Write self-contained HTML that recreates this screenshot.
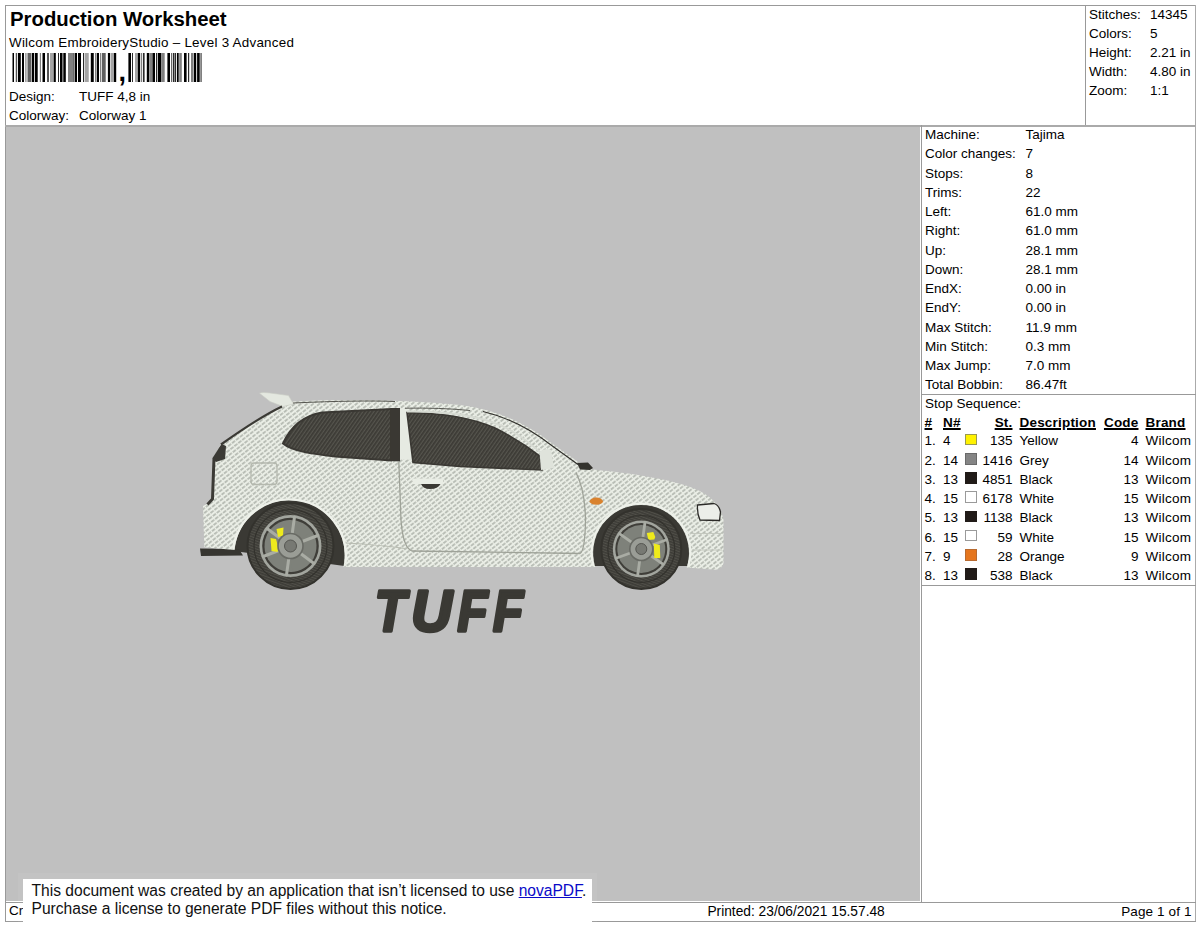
<!DOCTYPE html>
<html><head><meta charset="utf-8">
<style>
html,body{margin:0;padding:0;background:#fff;width:1200px;height:927px;overflow:hidden;position:relative}
body{font-family:"Liberation Sans",sans-serif;color:#000}
.a{position:absolute;white-space:nowrap;line-height:1}
.ln{position:absolute;background:#999}
.t{font-size:13.5px;letter-spacing:0px}
.b{font-weight:bold;letter-spacing:0.2px}
.u{text-decoration:underline;text-decoration-thickness:1.5px;text-underline-offset:0.5px}
.r{text-align:right}
.sw{position:absolute;width:10px;height:9.5px;border:1px solid #888}
svg{position:absolute;left:0;top:0}
</style></head><body>
<!-- frame -->
<div class="ln" style="left:5px;top:5.0px;width:1191px;height:1px"></div>
<div class="ln" style="left:5px;top:5.0px;width:1px;height:917px"></div>
<div class="ln" style="left:1195px;top:5px;width:1px;height:917px;background:#aaa"></div>
<div class="ln" style="left:5px;top:921.0px;width:1191px;height:1px"></div>
<div class="ln" style="left:5px;top:125.0px;width:1191px;height:2px;background:#aaa"></div>
<div class="ln" style="left:1085px;top:5.0px;width:1px;height:120px"></div>
<!-- gray design area -->
<div style="position:absolute;left:6px;top:127.0px;width:914px;height:774px;background:#c0c0c0"></div>
<div class="ln" style="left:921px;top:125px;width:1px;height:777px"></div>
<div class="ln" style="left:921px;top:394px;width:275px;height:1px"></div>
<div class="ln" style="left:921px;top:585px;width:275px;height:1px"></div>
<div class="ln" style="left:5px;top:902.0px;width:1191px;height:1px"></div>

<!-- header -->
<div class="a" style="left:10px;top:9.0px;font-size:20.35px;font-weight:bold">Production Worksheet</div>
<div class="a" style="left:9px;top:35.9px;font-size:13.4px;letter-spacing:0.25px">Wilcom EmbroideryStudio – Level 3 Advanced</div>
<svg width="1200" height="100" style="left:0;top:0"><rect x="12.5" y="53" width="1.5" height="29" fill="#000"/><rect x="15.8" y="53" width="1.0" height="29" fill="#2a2a2a"/><rect x="17.9" y="53" width="2.9" height="29" fill="#000"/><rect x="22.0" y="53" width="2.0" height="29" fill="#000"/><rect x="25.0" y="53" width="1.7" height="29" fill="#a4a4a4"/><rect x="27.5" y="53" width="3.5" height="29" fill="#606060"/><rect x="31.7" y="53" width="2.3" height="29" fill="#000"/><rect x="34.8" y="53" width="2.9" height="29" fill="#000"/><rect x="39.8" y="53" width="1.2" height="29" fill="#808080"/><rect x="42.5" y="53" width="2.5" height="29" fill="#000"/><rect x="47.0" y="53" width="2.0" height="29" fill="#555"/><rect x="50.0" y="53" width="3.75" height="29" fill="#a4a4a4"/><rect x="53.75" y="53" width="2.05" height="29" fill="#000"/><rect x="58.0" y="53" width="1.0" height="29" fill="#2a2a2a"/><rect x="60.0" y="53" width="2.5" height="29" fill="#000"/><rect x="63.3" y="53" width="2.5" height="29" fill="#000"/><rect x="68.0" y="53" width="5.0" height="29" fill="#808080"/><rect x="73.3" y="53" width="0.7" height="29" fill="#2a2a2a"/><rect x="74.6" y="53" width="2.4" height="29" fill="#000"/><rect x="78.0" y="53" width="3.0" height="29" fill="#000"/><rect x="83.0" y="53" width="1.0" height="29" fill="#2a2a2a"/><rect x="84.6" y="53" width="4.15" height="29" fill="#a4a4a4"/><rect x="90.8" y="53" width="2.95" height="29" fill="#000"/><rect x="95.0" y="53" width="1.0" height="29" fill="#808080"/><rect x="96.7" y="53" width="2.3" height="29" fill="#000"/><rect x="100.0" y="53" width="1.3" height="29" fill="#808080"/><rect x="102.0" y="53" width="3.7" height="29" fill="#606060"/><rect x="107.9" y="53" width="2.1" height="29" fill="#000"/><rect x="110.5" y="53" width="3.5" height="29" fill="#a4a4a4"/><rect x="114.0" y="53" width="2.2" height="29" fill="#000"/><rect x="128.4" y="53" width="2.6" height="29" fill="#000"/><rect x="132.0" y="53" width="1.0" height="29" fill="#2a2a2a"/><rect x="135.0" y="53" width="2.0" height="29" fill="#a4a4a4"/><rect x="137.6" y="53" width="2.4" height="29" fill="#000"/><rect x="140.7" y="53" width="1.3" height="29" fill="#808080"/><rect x="142.9" y="53" width="1.7" height="29" fill="#2a2a2a"/><rect x="146.8" y="53" width="2.6" height="29" fill="#000"/><rect x="149.9" y="53" width="2.6" height="29" fill="#808080"/><rect x="152.5" y="53" width="2.5" height="29" fill="#000"/><rect x="156.0" y="53" width="1.3" height="29" fill="#2a2a2a"/><rect x="158.0" y="53" width="3.2" height="29" fill="#000"/><rect x="161.2" y="53" width="3.5" height="29" fill="#808080"/><rect x="167.4" y="53" width="2.6" height="29" fill="#000"/><rect x="171.3" y="53" width="0.9" height="29" fill="#2a2a2a"/><rect x="173.0" y="53" width="1.4" height="29" fill="#2a2a2a"/><rect x="174.8" y="53" width="1.3" height="29" fill="#2a2a2a"/><rect x="177.0" y="53" width="1.7" height="29" fill="#000"/><rect x="179.2" y="53" width="2.6" height="29" fill="#808080"/><rect x="184.0" y="53" width="2.6" height="29" fill="#000"/><rect x="188.0" y="53" width="1.2" height="29" fill="#2a2a2a"/><rect x="191.0" y="53" width="2.6" height="29" fill="#808080"/><rect x="194.0" y="53" width="2.2" height="29" fill="#000"/><rect x="197.1" y="53" width="2.6" height="29" fill="#000"/><rect x="200.2" y="53" width="1.8" height="29" fill="#808080"/><text x="118.5" y="81" font-family="Liberation Sans" font-weight="bold" font-size="27" fill="#000">,</text></svg>
<div class="a t" style="left:9px;top:89.5px">Design:</div>
<div class="a t" style="left:79px;top:89.5px">TUFF 4,8 in</div>
<div class="a t" style="left:9px;top:108.7px">Colorway:</div>
<div class="a t" style="left:79px;top:108.7px">Colorway 1</div>

<div class="a t" style="left:1089px;top:7.5px">Stitches:</div>
<div class="a t" style="left:1150px;top:7.5px">14345</div>
<div class="a t" style="left:1089px;top:26.7px">Colors:</div>
<div class="a t" style="left:1150px;top:26.7px">5</div>
<div class="a t" style="left:1089px;top:45.9px">Height:</div>
<div class="a t" style="left:1150px;top:45.9px">2.21 in</div>
<div class="a t" style="left:1089px;top:65.1px">Width:</div>
<div class="a t" style="left:1150px;top:65.1px">4.80 in</div>
<div class="a t" style="left:1089px;top:84.3px">Zoom:</div>
<div class="a t" style="left:1150px;top:84.3px">1:1</div>

<!-- right panel -->
<div class="a t" style="left:925px;top:128.2px">Machine:</div><div class="a t" style="left:1025.5px;top:128.2px">Tajima</div>
<div class="a t" style="left:925px;top:147.43px">Color changes:</div><div class="a t" style="left:1025.5px;top:147.43px">7</div>
<div class="a t" style="left:925px;top:166.66px">Stops:</div><div class="a t" style="left:1025.5px;top:166.66px">8</div>
<div class="a t" style="left:925px;top:185.89px">Trims:</div><div class="a t" style="left:1025.5px;top:185.89px">22</div>
<div class="a t" style="left:925px;top:205.12px">Left:</div><div class="a t" style="left:1025.5px;top:205.12px">61.0 mm</div>
<div class="a t" style="left:925px;top:224.35px">Right:</div><div class="a t" style="left:1025.5px;top:224.35px">61.0 mm</div>
<div class="a t" style="left:925px;top:243.58px">Up:</div><div class="a t" style="left:1025.5px;top:243.58px">28.1 mm</div>
<div class="a t" style="left:925px;top:262.81px">Down:</div><div class="a t" style="left:1025.5px;top:262.81px">28.1 mm</div>
<div class="a t" style="left:925px;top:282.04px">EndX:</div><div class="a t" style="left:1025.5px;top:282.04px">0.00 in</div>
<div class="a t" style="left:925px;top:301.27px">EndY:</div><div class="a t" style="left:1025.5px;top:301.27px">0.00 in</div>
<div class="a t" style="left:925px;top:320.5px">Max Stitch:</div><div class="a t" style="left:1025.5px;top:320.5px">11.9 mm</div>
<div class="a t" style="left:925px;top:339.73px">Min Stitch:</div><div class="a t" style="left:1025.5px;top:339.73px">0.3 mm</div>
<div class="a t" style="left:925px;top:358.96px">Max Jump:</div><div class="a t" style="left:1025.5px;top:358.96px">7.0 mm</div>
<div class="a t" style="left:925px;top:378.19px">Total Bobbin:</div><div class="a t" style="left:1025.5px;top:378.19px">86.47ft</div>
<div class="a t" style="left:925px;top:396.65px">Stop Sequence:</div>
<div class="a t b u" style="left:924.5px;top:416.45px">#</div>
<div class="a t b u" style="left:943px;top:416.45px">N#</div>
<div class="a t b u r" style="left:960px;width:52.5px;top:416.45px">St.</div>
<div class="a t b u" style="left:1019.5px;top:416.45px">Description</div>
<div class="a t b u r" style="left:1090px;width:48.5px;top:416.45px">Code</div>
<div class="a t b u" style="left:1145.5px;top:416.45px">Brand</div>
<div class="a t" style="left:924.5px;top:434.45px">1.</div><div class="a t" style="left:943px;top:434.45px">4</div><div class="sw" style="left:965px;top:433.8px;background:#fff200;border-color:#9a9a50"></div><div class="a t r" style="left:960px;width:52.5px;top:434.45px">135</div><div class="a t" style="left:1019.5px;top:434.45px">Yellow</div><div class="a t r" style="left:1090px;width:48.5px;top:434.45px">4</div><div class="a t" style="left:1145.5px;top:434.45px;letter-spacing:0.25px">Wilcom</div>
<div class="a t" style="left:924.5px;top:453.68px">2.</div><div class="a t" style="left:943px;top:453.68px">14</div><div class="sw" style="left:965px;top:453.03px;background:#858585;border-color:#6a6a6a"></div><div class="a t r" style="left:960px;width:52.5px;top:453.68px">1416</div><div class="a t" style="left:1019.5px;top:453.68px">Grey</div><div class="a t r" style="left:1090px;width:48.5px;top:453.68px">14</div><div class="a t" style="left:1145.5px;top:453.68px;letter-spacing:0.25px">Wilcom</div>
<div class="a t" style="left:924.5px;top:472.91px">3.</div><div class="a t" style="left:943px;top:472.91px">13</div><div class="sw" style="left:965px;top:472.26px;background:#211b18;border-color:#211b18"></div><div class="a t r" style="left:960px;width:52.5px;top:472.91px">4851</div><div class="a t" style="left:1019.5px;top:472.91px">Black</div><div class="a t r" style="left:1090px;width:48.5px;top:472.91px">13</div><div class="a t" style="left:1145.5px;top:472.91px;letter-spacing:0.25px">Wilcom</div>
<div class="a t" style="left:924.5px;top:492.14px">4.</div><div class="a t" style="left:943px;top:492.14px">15</div><div class="sw" style="left:965px;top:491.49px;background:#ffffff;border-color:#9a9a9a"></div><div class="a t r" style="left:960px;width:52.5px;top:492.14px">6178</div><div class="a t" style="left:1019.5px;top:492.14px">White</div><div class="a t r" style="left:1090px;width:48.5px;top:492.14px">15</div><div class="a t" style="left:1145.5px;top:492.14px;letter-spacing:0.25px">Wilcom</div>
<div class="a t" style="left:924.5px;top:511.37px">5.</div><div class="a t" style="left:943px;top:511.37px">13</div><div class="sw" style="left:965px;top:510.72px;background:#211b18;border-color:#211b18"></div><div class="a t r" style="left:960px;width:52.5px;top:511.37px">1138</div><div class="a t" style="left:1019.5px;top:511.37px">Black</div><div class="a t r" style="left:1090px;width:48.5px;top:511.37px">13</div><div class="a t" style="left:1145.5px;top:511.37px;letter-spacing:0.25px">Wilcom</div>
<div class="a t" style="left:924.5px;top:530.6px">6.</div><div class="a t" style="left:943px;top:530.6px">15</div><div class="sw" style="left:965px;top:529.95px;background:#ffffff;border-color:#9a9a9a"></div><div class="a t r" style="left:960px;width:52.5px;top:530.6px">59</div><div class="a t" style="left:1019.5px;top:530.6px">White</div><div class="a t r" style="left:1090px;width:48.5px;top:530.6px">15</div><div class="a t" style="left:1145.5px;top:530.6px;letter-spacing:0.25px">Wilcom</div>
<div class="a t" style="left:924.5px;top:549.83px">7.</div><div class="a t" style="left:943px;top:549.83px">9</div><div class="sw" style="left:965px;top:549.18px;background:#e5761e;border-color:#b86a30"></div><div class="a t r" style="left:960px;width:52.5px;top:549.83px">28</div><div class="a t" style="left:1019.5px;top:549.83px">Orange</div><div class="a t r" style="left:1090px;width:48.5px;top:549.83px">9</div><div class="a t" style="left:1145.5px;top:549.83px;letter-spacing:0.25px">Wilcom</div>
<div class="a t" style="left:924.5px;top:569.06px">8.</div><div class="a t" style="left:943px;top:569.06px">13</div><div class="sw" style="left:965px;top:568.41px;background:#211b18;border-color:#211b18"></div><div class="a t r" style="left:960px;width:52.5px;top:569.06px">538</div><div class="a t" style="left:1019.5px;top:569.06px">Black</div><div class="a t r" style="left:1090px;width:48.5px;top:569.06px">13</div><div class="a t" style="left:1145.5px;top:569.06px;letter-spacing:0.25px">Wilcom</div>

<!-- car -->
<svg id="car" width="1200" height="927" viewBox="0 0 1200 927"><defs>
<pattern id="stw" width="5" height="3.8" patternUnits="userSpaceOnUse" patternTransform="rotate(-38)">
<rect width="5" height="3.8" fill="#eaeee6"/>
<rect x="0" y="1.4" width="3.8" height="1" fill="#6f746a" opacity="0.75"/>
</pattern>
<pattern id="stk" width="3" height="3" patternUnits="userSpaceOnUse" patternTransform="rotate(-55)">
<rect width="3" height="3" fill="#3c3a35"/>
<rect x="0" y="1.8" width="3" height="0.9" fill="#6a6a62" opacity="0.8"/>
</pattern>
<pattern id="tire" width="2.5" height="2.5" patternUnits="userSpaceOnUse" patternTransform="rotate(20)">
<rect width="2.5" height="2.5" fill="#3d3c37"/>
<rect x="0" y="1.5" width="2.5" height="0.8" fill="#5d5c55" opacity="0.8"/>
</pattern>
</defs>
<!-- wheel arch shadows -->
<path d="M233.66,551 A56,56 0 1 1 344.45,566 Z" fill="#3a3934"/>
<path d="M200,548.5 L239,549 L243,555.5 L201,556 Z" fill="#363530"/>
<path d="M594.4,566 A48.5,48.5 0 1 1 687.6,566 Z" fill="#3a3934"/>
<!-- body -->
<path id="body" d="M281,406.5 L293,401.5 Q380,397.5 460,405 C495,409 527,424 550,442 L582.5,465 L593,469.5 C640,474 690,482 708,496 Q721,506 723.5,520 L723.5,563 Q722.5,568.5 716,569.8 L686.7,567.5 A47.9,47.9 0 1 0 595.3,567 L343.42,567 A55.2,55.2 0 1 0 234.55,550 L204.3,547.3 L203,506 L208,503.5 L212,498 L213.5,457 L221,444 C240,432 262,416 281,406.5 Z" fill="url(#stw)"/>
<!-- spoiler -->
<path d="M259.5,393.2 Q262,392 270,393 L288.5,395.5 L293.5,404 L283,406.5 L270,401.5 Z" fill="#e4e8e0" stroke="#c9cdc4" stroke-width="0.6"/>
<!-- roof line -->
<path d="M293,403 Q360,400 395,401.5" stroke="#55554f" stroke-width="1" fill="none"/>
<!-- hatch edge dark -->
<path d="M282,406.5 C262,416 240,431 221,444.5" stroke="#3b3a35" stroke-width="2.2" fill="none"/>
<path d="M212.5,458 L221.5,444 L226,446 L225,459 L216,462 Z" fill="#3b3a35"/>
<path d="M214,458 L212.5,499 L207.5,504.5" stroke="#3b3a35" stroke-width="3" fill="none"/>
<!-- rear side window -->
<path d="M283,443.5 C290,428 302,416 322,412.5 L391,409 L391,460.5 L335,456.5 C312,454 292,451 283,443.5 Z" fill="url(#stk)" stroke="#3a3833" stroke-width="2"/>
<!-- B pillar -->
<path d="M390.5,408 L400,408 L400,461.5 L390.5,461 Z" fill="#3a3833"/>
<path d="M400,408.5 L407,409 L413,459.5 L400,459.5 Z" fill="#e6eae2"/>
<!-- front window -->
<path d="M407,412.5 C440,413 470,417 495,428 C515,438 532,450 541,457 L542,470 L460,466.5 L413,462.5 Z" fill="url(#stk)" stroke="#3a3833" stroke-width="1.6"/>
<!-- A pillar lines -->
<path d="M483,411.5 C510,418 533,431 551,445 L578,464.5" stroke="#2f2e2a" stroke-width="1.1" fill="none"/>
<path d="M405,408.2 Q440,407.5 470,410.5" stroke="#4a4944" stroke-width="0.9" fill="none"/>
<path d="M407,411.5 C450,411 485,416 510,430 C528,440 540,452 550,461" stroke="#d6dad2" stroke-width="2" fill="none"/>
<!-- mirror -->
<path d="M539.5,452 Q545,447 551,450 L554,468 L541,470 Z" fill="#dfe3db"/>
<!-- cowl -->
<path d="M577,463 L588,462.5 L593,468 L590,470 L580,469.5 Z" fill="#34332e"/>
<!-- door seams -->
<path d="M398.8,461 L401,520 Q403,548 412,551 L580,553.5 Q585,551 585.5,520 Q585,490 576,472.5" stroke="#9ea298" stroke-width="1.3" fill="none"/>
<path d="M346,543 Q380,545 405,548.5" stroke="#b8bcb2" stroke-width="1.2" fill="none"/>
<!-- door handle -->
<path d="M413,478.5 L443,478.5 L443,484 L413,484 Z" fill="#e9ede5"/>
<path d="M421,484 L440.5,484 Q438,489 430,489 Q423,489 421,484 Z" fill="#3a3934"/>
<!-- fuel cap -->
<rect x="251" y="463" width="26" height="21.5" rx="3" fill="none" stroke="#b4b8ae" stroke-width="1.3"/>
<!-- front bumper lines -->
<path d="M690,533.5 L722,533.5 M692,550 L722,550" stroke="#c3c7be" stroke-width="1" fill="none"/>
<!-- orange marker -->
<ellipse cx="596.3" cy="501.2" rx="6.6" ry="3.6" fill="#d9822e"/>
<!-- headlight -->
<path d="M697.5,505 L714,503.5 Q719,505 720.5,512 L719.5,520.5 L700,520 Q697,514 697.5,505 Z" fill="#eceee9" stroke="#2b2a27" stroke-width="1.3"/>
<!-- arch lips -->
<path d="M233.3,549 A56.5,56.5 0 1 1 345.5,563" stroke="#eef1ea" stroke-width="2.4" fill="none"/>
<path d="M593.5,566 A49.3,49.3 0 1 1 688.5,566" stroke="#eef1ea" stroke-width="2" fill="none"/>
<!-- rear wheel -->
<g transform="translate(290.5,546)">
<circle r="43" fill="url(#tire)"/>
<circle r="43" fill="none" stroke="#33322d" stroke-width="2"/>
<circle r="36.5" fill="none" stroke="#33322d" stroke-width="1.2"/>
<circle r="31" fill="#a2a59e"/>
<circle r="28.3" fill="#3f3e39"/>
<g fill="#7e817a">
<path d="M0,0 L-4.5,-25.6 A26,26 0 0 1 21,-15.3 Z" transform="rotate(6)"/>
<path d="M0,0 L-4.5,-25.6 A26,26 0 0 1 21,-15.3 Z" transform="rotate(66)"/>
<path d="M0,0 L-4.5,-25.6 A26,26 0 0 1 21,-15.3 Z" transform="rotate(126)"/>
<path d="M0,0 L-4.5,-25.6 A26,26 0 0 1 21,-15.3 Z" transform="rotate(186)"/>
<path d="M0,0 L-4.5,-25.6 A26,26 0 0 1 21,-15.3 Z" transform="rotate(246)"/>
<path d="M0,0 L-4.5,-25.6 A26,26 0 0 1 21,-15.3 Z" transform="rotate(306)"/>
</g>
<g stroke="#a9aca4" stroke-width="3" stroke-linecap="round">
<line x1="0" y1="0" x2="4" y2="-29"/><line x1="0" y1="0" x2="27.3" y2="-10.5"/><line x1="0" y1="0" x2="23.5" y2="17.5"/>
<line x1="0" y1="0" x2="-4" y2="29"/><line x1="0" y1="0" x2="-27.3" y2="10.5"/><line x1="0" y1="0" x2="-23.5" y2="-17.5"/>
</g>
<path d="M-14,-17 L-7,-18.5 L-7.5,-10 L-12.5,-9 Z M-20,-8 L-14.5,-7 L-12,2 L-13,6 L-19,5 Z" fill="#eeea1c"/>
<circle r="12.5" fill="#9a9d96" stroke="#686a64" stroke-width="1.6"/>
<circle r="6" fill="#777973" stroke="#555651" stroke-width="1"/>
</g>
<!-- front wheel -->
<g transform="translate(641.3,549)">
<circle r="40" fill="url(#tire)"/>
<circle r="40" fill="none" stroke="#33322d" stroke-width="2"/>
<circle r="33.5" fill="none" stroke="#33322d" stroke-width="1.2"/>
<circle r="28.5" fill="#a2a59e"/>
<circle r="26" fill="#3f3e39"/>
<g fill="#7e817a">
<path d="M0,0 L-4.2,-23.6 A24,24 0 0 1 19.4,-14.1 Z" transform="rotate(8)"/>
<path d="M0,0 L-4.2,-23.6 A24,24 0 0 1 19.4,-14.1 Z" transform="rotate(68)"/>
<path d="M0,0 L-4.2,-23.6 A24,24 0 0 1 19.4,-14.1 Z" transform="rotate(128)"/>
<path d="M0,0 L-4.2,-23.6 A24,24 0 0 1 19.4,-14.1 Z" transform="rotate(188)"/>
<path d="M0,0 L-4.2,-23.6 A24,24 0 0 1 19.4,-14.1 Z" transform="rotate(248)"/>
<path d="M0,0 L-4.2,-23.6 A24,24 0 0 1 19.4,-14.1 Z" transform="rotate(308)"/>
</g>
<g stroke="#a9aca4" stroke-width="2.8" stroke-linecap="round">
<line x1="0" y1="0" x2="3.7" y2="-26.7" /><line x1="0" y1="0" x2="25.3" y2="-9.2"/><line x1="0" y1="0" x2="21.6" y2="15.1"/>
<line x1="0" y1="0" x2="-3.7" y2="26.7"/><line x1="0" y1="0" x2="-25.3" y2="9.2"/><line x1="0" y1="0" x2="-21.6" y2="-15.1"/>
</g>
<path d="M5.5,-16 L12,-17 L14,-12 L13,-9.5 L7,-9 Z M12.5,-5.5 L18.5,-4 L19,9 L13,9 Z" fill="#eeea1c"/>
<circle r="11.5" fill="#9a9d96" stroke="#686a64" stroke-width="1.6"/>
<circle r="5.5" fill="#777973" stroke="#555651" stroke-width="1"/>
</g>
<!-- TUFF -->
<g font-family="Liberation Sans" font-weight="bold" font-style="italic" font-size="57.5" fill="#3a3934" stroke="#3a3934" stroke-width="3.4" stroke-linejoin="round">
<text transform="translate(374.7,631) scale(0.885,1)">T</text>
<text transform="translate(411.2,631) scale(0.98,1)">U</text>
<text transform="translate(457.6,631) scale(0.86,1)">F</text>
<text transform="translate(492.9,631) scale(0.86,1)">F</text>
</g>
</svg>

<!-- footer -->
<div class="a t" style="left:9px;top:904.4px">Cr</div>
<div class="a t" style="left:707.4px;top:905.0px;font-size:13.75px">Printed: 23/06/2021 15.57.48</div>
<div class="a t" style="left:1121.2px;top:904.8px;letter-spacing:0.12px">Page 1 of 1</div>

<!-- novaPDF overlay -->
<div style="position:absolute;left:18px;top:873.0px;width:579px;height:60px;background:rgba(255,255,255,0.05)"></div>
<div style="position:absolute;left:23px;top:878.5px;width:569px;height:50px;background:#fff"></div>
<div class="a" style="left:31.5px;top:883.2px;font-size:15.6px;color:#111">This document was created by an application that isn’t licensed to use <span style="color:#0a0ac8;text-decoration:underline">novaPDF</span>.</div>
<div class="a" style="left:31.5px;top:901.1px;font-size:15.6px;color:#111">Purchase a license to generate PDF files without this notice.</div>
</body></html>
